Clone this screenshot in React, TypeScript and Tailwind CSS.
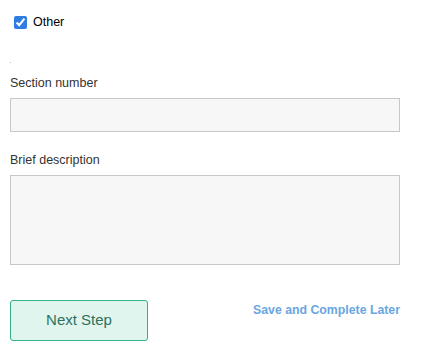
export default function App() {
    return (
        <div className="w-[424px] h-[348px] bg-white px-[10px] pt-[12px] text-[12.5px] text-[#333] font-['Liberation_Sans',Arial,sans-serif]">
            <label className="flex items-center h-[20px]">
                <input type="checkbox" defaultChecked className="w-[13px] h-[13px] ml-[4px] mr-[6px] accent-[#2f7de1]" />
                <span className="text-[12.5px] text-black">Other</span>
            </label>

            <div className="mt-[30px] w-[1px] h-[1px] bg-[#bbb]" />

            <div className="mt-[13px] leading-[15px]">Section number</div>
            <input className="mt-[7px] block w-[390px] h-[34px] bg-[#f7f7f7] border border-[#c8c8c8] outline-none" />

            <div className="mt-[21px] leading-[15px]">Brief description</div>
            <textarea className="mt-[7px] block w-[390px] h-[90px] bg-[#f7f7f7] border border-[#c8c8c8] resize-none outline-none" />

            <div className="mt-[35px] flex items-start justify-between w-[390px]">
                <button className="w-[138px] h-[41px] rounded-[3px] border border-[#33b38c] bg-[#e1f5ef] text-[15px] text-[#2a7260]">
                    Next Step
                </button>
                <a className="mt-[1px] font-bold text-[12.3px] text-[#6aa6e2] cursor-pointer">Save and Complete Later</a>
            </div>
        </div>
    );
}
